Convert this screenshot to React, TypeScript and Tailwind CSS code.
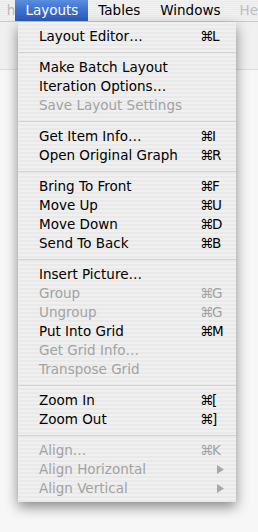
type Item =
  | { sep: true }
  | { label: string; key?: string; off?: boolean; sub?: boolean; sep?: false };

const items: Item[] = [
  { label: "Layout Editor…", key: "L" },
  { sep: true },
  { label: "Make Batch Layout" },
  { label: "Iteration Options…" },
  { label: "Save Layout Settings", off: true },
  { sep: true },
  { label: "Get Item Info…", key: "I" },
  { label: "Open Original Graph", key: "R" },
  { sep: true },
  { label: "Bring To Front", key: "F" },
  { label: "Move Up", key: "U" },
  { label: "Move Down", key: "D" },
  { label: "Send To Back", key: "B" },
  { sep: true },
  { label: "Insert Picture…" },
  { label: "Group", key: "G", off: true },
  { label: "Ungroup", key: "G", off: true },
  { label: "Put Into Grid", key: "M" },
  { label: "Get Grid Info…", off: true },
  { label: "Transpose Grid", off: true },
  { sep: true },
  { label: "Zoom In", key: "[" },
  { label: "Zoom Out", key: "]" },
  { sep: true },
  { label: "Align…", key: "K", off: true },
  { label: "Align Horizontal", sub: true, off: true },
  { label: "Align Vertical", sub: true, off: true },
];

const App = () => {
  return (
    <div className="relative w-[258px] h-[532px] overflow-hidden bg-[#f7f7f7] text-[13.5px] font-['DejaVu_Sans',sans-serif]">
      {/* Menu bar */}
      <div className="flex h-[22px] items-stretch border-b border-[#c9c9c9] bg-[repeating-linear-gradient(to_bottom,#f1f1f1_0px,#f1f1f1_1px,#ebebeb_1px,#ebebeb_2px)]">
        <div className="flex items-center w-[18px] overflow-hidden justify-end text-[#b8b8b8]">h</div>
        <div className="flex items-center px-[10px] text-white bg-gradient-to-b from-[#5a8ee0] via-[#3c6fcd] to-[#2d5cb8]">
          Layouts
        </div>
        <div className="flex items-center px-[10px] text-black">Tables</div>
        <div className="flex items-center px-[10px] text-black">Windows</div>
        <div className="flex items-center pl-[9px] text-[#bdbdbd] whitespace-nowrap">He</div>
      </div>

      {/* blurred window behind */}
      <div className="h-[48px] border-b border-[#dcdcdc] bg-[#f0f0f0]" />

      {/* Dropdown */}
      <div className="absolute left-[18px] top-[22px] w-[218px] pt-[5px] pb-[4px] shadow-[0_5px_12px_rgba(0,0,0,0.45)] bg-[repeating-linear-gradient(to_bottom,#f0f0f0_0px,#f0f0f0_2px,#e9e9e9_2px,#e9e9e9_4px)]">
        {items.map((it, i) =>
          it.sep ? (
            <div key={i} className="h-[12px] flex items-center">
              <div className="h-px w-full bg-[#d2d2d2]" />
            </div>
          ) : (
            <div
              key={i}
              className={`flex items-center h-[19px] pl-[21px] pr-[12px] whitespace-nowrap ${
                it.off ? "text-[#a2a2a2]" : "text-black"
              }`}
            >
              <span className="flex-1">{it.label}</span>
              <span className="w-[24px] flex items-center">
                {it.key && (
                  <>
                    <span className="w-[12px]">⌘</span>
                    <span>{it.key}</span>
                  </>
                )}
                {it.sub && (
                  <svg className="ml-auto" width="7" height="9" viewBox="0 0 7 9">
                    <path d="M0 0 L7 4.5 L0 9 Z" fill="#a8a8a8" />
                  </svg>
                )}
              </span>
            </div>
          )
        )}
      </div>
    </div>
  );
};

export default App;
